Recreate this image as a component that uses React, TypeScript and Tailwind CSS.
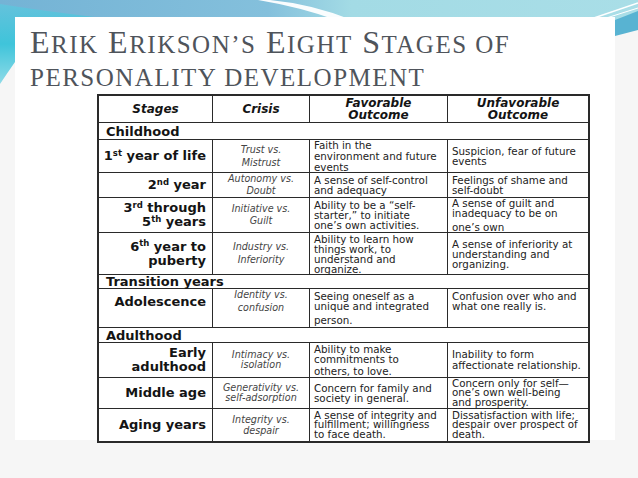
import React from "react";

const Sup = ({ children }: { children: React.ReactNode }) => (
  <sup className="text-[8.5px]">{children}</sup>
);

function Stage({ children, cls = "items-center" }: { children: React.ReactNode; cls?: string }) {
  return (
    <div className={`bg-white flex justify-end pr-[6px] text-right font-bold text-[13px] leading-[14px] text-[#141414] ${cls}`}>
      <div>{children}</div>
    </div>
  );
}

function Crisis({ lines, cls = "justify-center", lh = "leading-[12.5px]" }: { lines: string[]; cls?: string; lh?: string }) {
  return (
    <div className={`bg-white flex flex-col items-center italic text-[9.6px] text-[#454545] ${lh} ${cls}`}>
      {lines.map((l, i) => (
        <span key={i} className="whitespace-nowrap">{l}</span>
      ))}
    </div>
  );
}

function Out({ children, cls = "justify-center", lh = "leading-[10.5px]" }: { children: React.ReactNode; cls?: string; lh?: string }) {
  return (
    <div className={`bg-white flex flex-col pl-[4px] text-[10.3px] text-[#222222] whitespace-nowrap ${lh} ${cls}`}>
      {children}
    </div>
  );
}

function Section({ children }: { children: React.ReactNode }) {
  return (
    <div className="bg-white col-span-4 flex items-center pl-[7px] font-bold text-[13px] leading-[13px] text-[#141414]">
      {children}
    </div>
  );
}

function Head({ lines }: { lines: string[] }) {
  return (
    <div className="bg-white flex flex-col items-center justify-center font-bold italic text-[12px] leading-[12px] text-[#141414]">
      {lines.map((l, i) => (
        <span key={i}>{l}</span>
      ))}
    </div>
  );
}

export default function App() {
  return (
    <div className="relative w-[638px] h-[478px] overflow-hidden bg-[#f6f6f6] pt-[17px] pl-[15px]">
      <svg className="absolute inset-0" width="638" height="478" viewBox="0 0 638 478">
        <defs>
          <linearGradient id="band" x1="0" y1="0" x2="1" y2="0">
            <stop offset="0" stopColor="#74b3d5" />
            <stop offset="0.42" stopColor="#84c0dc" />
            <stop offset="0.55" stopColor="#a3dbe5" />
            <stop offset="1" stopColor="#a9dee7" />
          </linearGradient>
          <linearGradient id="cyan" x1="0" y1="0" x2="0" y2="1">
            <stop offset="0" stopColor="#64c2dc" />
            <stop offset="0.5" stopColor="#3fc4da" />
            <stop offset="1" stopColor="#8fdbe8" />
          </linearGradient>
        </defs>
        <rect x="0" y="0" width="638" height="20" fill="url(#band)" />
        <path d="M0,4 Q50,12 120,20 L15,20 L15,62 Q8,72 0,84 Z" fill="url(#cyan)" />
        <path d="M270,0 Q312,4 352,20 L336,20 Q300,7 258,0 Z" fill="#ffffff" opacity="0.95" />
        <path d="M615,20 L638,11 L638,30 L615,36 Z" fill="#58b3d2" />
        <path d="M588,20 L638,3" stroke="#ffffff" strokeWidth="1.4" />
        <path d="M600,20 L638,8" stroke="#ffffff" strokeWidth="1" />
      </svg>

      <div className="relative w-[600px] h-[423px] bg-white pt-[10px]">
        <div className="pl-[15px] font-['Liberation_Serif',serif] text-[32px] leading-[30px] tracking-[1.5px] text-[#4f545b] whitespace-nowrap">
          <div>
            E<span className="text-[25px]">RIK</span> E<span className="text-[25px]">RIKSON’S</span> E
            <span className="text-[25px]">IGHT</span> S<span className="text-[25px]">TAGES OF</span>
          </div>
          <div>
            <span className="text-[25px]">PERSONALITY DEVELOPMENT</span>
          </div>
        </div>

        <div className="mt-[1px] ml-[82px] w-[493px] grid grid-cols-[113px_96px_137px_140px] grid-rows-[26px_16px_32px_24px_34px_41px_13px_38px_14px_34px_30px_32px] gap-px bg-[#2a2a2a] border-2 border-[#2a2a2a] font-['DejaVu_Sans',sans-serif]">
          <Head lines={["Stages"]} />
          <Head lines={["Crisis"]} />
          <Head lines={["Favorable", "Outcome"]} />
          <Head lines={["Unfavorable", "Outcome"]} />

          <Section>Childhood</Section>

          <Stage>
            1<Sup>st</Sup> year of life
          </Stage>
          <Crisis lines={["Trust vs.", "Mistrust"]} lh="leading-[13px]" />
          <Out lh="leading-[11px]">
            <span>Faith in the</span>
            <span>environment and future</span>
            <span>events</span>
          </Out>
          <Out>
            <span>Suspicion, fear of future</span>
            <span>events</span>
          </Out>

          <Stage>
            2<Sup>nd</Sup> year
          </Stage>
          <Crisis lines={["Autonomy vs.", "Doubt"]} />
          <Out>
            <span>A sense of self-control</span>
            <span>and adequacy</span>
          </Out>
          <Out>
            <span>Feelings of shame and</span>
            <span>self-doubt</span>
          </Out>

          <Stage>
            3<Sup>rd</Sup> through
            <br />
            5<Sup>th</Sup> years
          </Stage>
          <Crisis lines={["Initiative vs.", "Guilt"]} />
          <Out lh="leading-[10.3px]">
            <span>Ability to be a “self-</span>
            <span>starter,” to initiate</span>
            <span>one’s own activities.</span>
          </Out>
          <Out lh="leading-[10.3px]">
            <span>A sense of guilt and</span>
            <span>inadequacy to be on</span>
            <span className="mt-[3px]">one’s own</span>
          </Out>

          <Stage>
            6<Sup>th</Sup> year to
            <br />
            puberty
          </Stage>
          <Crisis lines={["Industry vs.", "Inferiority"]} />
          <Out lh="leading-[10px]">
            <span>Ability to learn how</span>
            <span>things work, to</span>
            <span>understand and</span>
            <span>organize.</span>
          </Out>
          <Out lh="leading-[10px]">
            <span>A sense of inferiority at</span>
            <span>understanding and</span>
            <span>organizing.</span>
          </Out>

          <Section>Transition years</Section>

          <Stage cls="items-start pt-[6px]">Adolescence</Stage>
          <Crisis lines={["Identity vs.", "confusion"]} cls="justify-start pt-[0px]" />
          <Out cls="justify-start pt-[2px]" lh="leading-[10px]">
            <span>Seeing oneself as a</span>
            <span>unique and integrated</span>
            <span className="mt-[4px]">person.</span>
          </Out>
          <Out cls="justify-start pt-[2px]" lh="leading-[10px]">
            <span>Confusion over who and</span>
            <span>what one really is.</span>
          </Out>

          <Section>Adulthood</Section>

          <Stage>
            Early
            <br />
            adulthood
          </Stage>
          <Crisis lines={["Intimacy vs.", "isolation"]} lh="leading-[10.5px]" />
          <Out lh="leading-[10px]">
            <span>Ability to make</span>
            <span>commitments to</span>
            <span className="mt-[2px]">others, to love.</span>
          </Out>
          <Out lh="leading-[11px]">
            <span>Inability to form</span>
            <span>affectionate relationship.</span>
          </Out>

          <Stage>Middle age</Stage>
          <Crisis lines={["Generativity vs.", "self-adsorption"]} lh="leading-[10.5px]" />
          <Out lh="leading-[10px]">
            <span>Concern for family and</span>
            <span>society in general.</span>
          </Out>
          <Out lh="leading-[9.5px]">
            <span>Concern only for self—</span>
            <span>one’s own well-being</span>
            <span>and prosperity.</span>
          </Out>

          <Stage>Aging years</Stage>
          <Crisis lines={["Integrity vs.", "despair"]} lh="leading-[11px]" />
          <Out lh="leading-[9.5px]">
            <span>A sense of integrity and</span>
            <span>fulfillment; willingness</span>
            <span>to face death.</span>
          </Out>
          <Out lh="leading-[9.5px]">
            <span>Dissatisfaction with life;</span>
            <span>despair over prospect of</span>
            <span>death.</span>
          </Out>
        </div>
      </div>
    </div>
  );
}
